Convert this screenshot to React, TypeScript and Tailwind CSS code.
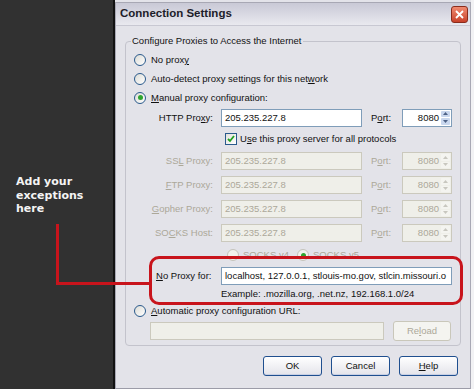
import React from "react";

const ui = "font-['Liberation_Sans',Arial,sans-serif] text-[9.5px] leading-none";

function Radio({ checked = false, disabled = false }: { checked?: boolean; disabled?: boolean }) {
  return (
    <span
      className={
        "flex h-[12px] w-[12px] shrink-0 items-center justify-center rounded-full border " +
        (disabled
          ? "border-[#c4c3bb] bg-[#f2f2ee]"
          : "border-[#2a5a8c] bg-linear-to-br from-[#dcdcd6] to-white")
      }
    >
      {checked && <span className="h-[5px] w-[5px] rounded-full bg-[#2fa52f]" />}
    </span>
  );
}

function Checkbox() {
  return (
    <span className="flex h-[12px] w-[12px] shrink-0 items-center justify-center border border-[#2a5a8c] bg-linear-to-br from-[#e2e2dc] to-white">
      <svg width="8" height="8" viewBox="0 0 8 8">
        <path d="M1 4l2 2 4-5" fill="none" stroke="#21a121" strokeWidth="1.8" />
      </svg>
    </span>
  );
}

function TextBox({ value, disabled = false, w }: { value: string; disabled?: boolean; w: string }) {
  return (
    <div
      className={
        w +
        " flex h-[18px] shrink-0 items-center overflow-hidden border px-[3px] " +
        (disabled ? "border-[#cbc9bd] bg-[#efefe9] text-[#aca899]" : "border-[#7f9db9] bg-white text-[#111]")
      }
    >
      <span className="whitespace-nowrap">{value}</span>
    </div>
  );
}

function PortBox({ disabled = false }: { disabled?: boolean }) {
  const arrow = disabled ? "#c8c7bf" : "#4d6185";
  return (
    <div
      className={
        "flex h-[18px] w-[50px] shrink-0 items-center border pl-[2px] " +
        (disabled ? "border-[#cbc9bd] bg-[#efefe9] text-[#aca899]" : "border-[#7f9db9] bg-white text-[#111]")
      }
    >
      <span className="flex-1 pr-[2px] text-right">8080</span>
      <div className="flex h-full w-[10px] flex-col gap-px py-px pr-px">
        <span className={"flex flex-1 items-center justify-center rounded-[1px] " + (disabled ? "bg-[#f4f4f0]" : "bg-[#c9d7ee]")}>
          <svg width="5" height="3" viewBox="0 0 5 3">
            <path d="M0 3L2.5 0 5 3z" fill={arrow} />
          </svg>
        </span>
        <span className={"flex flex-1 items-center justify-center rounded-[1px] " + (disabled ? "bg-[#f4f4f0]" : "bg-[#c9d7ee]")}>
          <svg width="5" height="3" viewBox="0 0 5 3">
            <path d="M0 0h5L2.5 3z" fill={arrow} />
          </svg>
        </span>
      </div>
    </div>
  );
}

function ProxyRow({ label, disabled, className }: { label: React.ReactNode; disabled?: boolean; className: string }) {
  const txt = disabled ? "text-[#aca899]" : "text-[#111]";
  return (
    <div className={className + " flex items-center pl-[12px]"}>
      <span className={"w-[75px] text-right whitespace-nowrap " + txt}>{label}</span>
      <span className="w-[8px]" />
      <TextBox value="205.235.227.8" disabled={disabled} w="w-[141px]" />
      <span className={"ml-[9px] w-[31px] " + txt}>
        P<u>o</u>rt:
      </span>
      <PortBox disabled={disabled} />
    </div>
  );
}

function Button({ children }: { children: React.ReactNode }) {
  return (
    <div className="flex h-[20px] w-[59px] items-center justify-center rounded-[3px] border border-[#1f4f8f] bg-linear-to-b from-white to-[#e4e4ea] text-[#111] shadow-[inset_0_-1px_0_#c8d0e4]">
      {children}
    </div>
  );
}

export default function App() {
  return (
    <div className="relative flex h-[389px] w-[474px] overflow-hidden bg-[#313131]">
      {/* annotation column */}
      <div className="w-[113px] shrink-0 pl-[16px] pt-[175px]">
        <p className="font-['DejaVu_Sans',Verdana,sans-serif] text-[11px] font-bold leading-[13.5px] text-[#f4f4f4]">
          Add your
          <br />
          exceptions
          <br />
          here
        </p>
      </div>

      {/* dialog */}
      <div className={ui + " flex w-[358px] shrink-0 flex-col border-l-2 border-[#121212] bg-[#e3e3e9] pt-[2px]"}>
        <div className="flex flex-1 flex-col border border-[#a8a8b4] border-b-[#9c9ca8]">
          <div className="flex h-[23px] items-center justify-between border-b border-[#c8c8d2] bg-linear-to-b from-[#c9c9d6] to-[#e9e9ef] pl-[4px] pr-[2px]">
            <span className="font-['Liberation_Sans',Arial,sans-serif] text-[11.5px] font-bold text-[#1d1d2a]">
              Connection Settings
            </span>
            <span className="flex h-[17px] w-[17px] items-center justify-center rounded-[3px] border border-[#8a2c1c] bg-linear-to-b from-[#f08a70] to-[#c8412a]">
              <svg width="9" height="9" viewBox="0 0 9 9">
                <path d="M1 1l7 7M8 1L1 8" stroke="#fff" strokeWidth="1.8" />
              </svg>
            </span>
          </div>

          {/* group box */}
          <div className="relative ml-[9px] mr-[9px] mt-[15px] h-[305px] rounded-[4px] border border-[#c3c3cc] pt-[8px]">
            <span className="absolute -top-[6px] left-[5px] bg-[#e3e3e9] px-px text-[#111]">
              Configure Proxies to Access the Internet
            </span>

            <div className="flex h-[19px] items-center gap-[5px] pl-[8px] text-[#111]">
              <Radio />
              <span>
                No prox<u>y</u>
              </span>
            </div>
            <div className="flex h-[19px] items-center gap-[5px] pl-[8px] text-[#111]">
              <Radio />
              <span>
                Auto-detect proxy settings for this net<u>w</u>ork
              </span>
            </div>
            <div className="flex h-[19px] items-center gap-[5px] pl-[8px] text-[#111]">
              <Radio checked />
              <span>
                <u>M</u>anual proxy configuration:
              </span>
            </div>

            <ProxyRow
              className="h-[21px]"
              label={
                <>
                  HTTP Pro<u>x</u>y:
                </>
              }
            />
            <div className="flex h-[21px] items-center gap-[3px] pl-[99px] text-[#111]">
              <Checkbox />
              <span>
                U<u>s</u>e this proxy server for all protocols
              </span>
            </div>
            <ProxyRow
              disabled
              className="h-[24px]"
              label={
                <>
                  SS<u>L</u> Proxy:
                </>
              }
            />
            <ProxyRow
              disabled
              className="h-[24px]"
              label={
                <>
                  <u>F</u>TP Proxy:
                </>
              }
            />
            <ProxyRow
              disabled
              className="h-[24px]"
              label={
                <>
                  <u>G</u>opher Proxy:
                </>
              }
            />
            <ProxyRow
              disabled
              className="h-[24px]"
              label={
                <>
                  SO<u>C</u>KS Host:
                </>
              }
            />

            <div className="flex h-[20px] items-center pl-[101px] text-[#aca899]">
              <Radio disabled />
              <span className="ml-[4px] w-[54px]">SOCKS v4</span>
              <Radio disabled checked />
              <span className="ml-[4px]">SOCKS v5</span>
            </div>

            <div className="flex h-[21px] items-center pl-[30px] text-[#111]">
              <span className="w-[65px]">
                <u>N</u>o Proxy for:
              </span>
              <TextBox value="localhost, 127.0.0.1, stlouis-mo.gov, stlcin.missouri.o" w="w-[231px]" />
            </div>
            <div className="flex h-[16px] items-center pl-[95px] text-[#111]">
              Example: .mozilla.org, .net.nz, 192.168.1.0/24
            </div>
            <div className="flex h-[18px] items-center gap-[5px] pl-[8px] text-[#111]">
              <Radio />
              <span>
                <u>A</u>utomatic proxy configuration URL:
              </span>
            </div>
            <div className="flex h-[22px] items-center pl-[24px]">
              <TextBox value="" disabled w="w-[234px]" />
              <div className="ml-[9px] flex h-[20px] w-[58px] items-center justify-center rounded-[3px] border border-[#c9c7ba] bg-[#f4f4f0] text-[#aca899]">
                Re<u>l</u>oad
              </div>
            </div>
          </div>

          <div className="mt-[10px] flex justify-end gap-[9px] pr-[12px]">
            <Button>OK</Button>
            <Button>Cancel</Button>
            <Button>
              <u>H</u>elp
            </Button>
          </div>
        </div>
      </div>
      <div className="flex-1 bg-[#f2f2f4]" />

      {/* red annotation overlay */}
      <div className="absolute left-[56px] top-[224px] h-[61px] w-[3px] bg-[#c8141c]" />
      <div className="absolute left-[56px] top-[282px] h-[3px] w-[95px] bg-[#c8141c]" />
      <div className="absolute left-[149px] top-[256px] h-[49px] w-[314px] rounded-[10px] border-[3px] border-[#c8141c]" />
    </div>
  );
}
